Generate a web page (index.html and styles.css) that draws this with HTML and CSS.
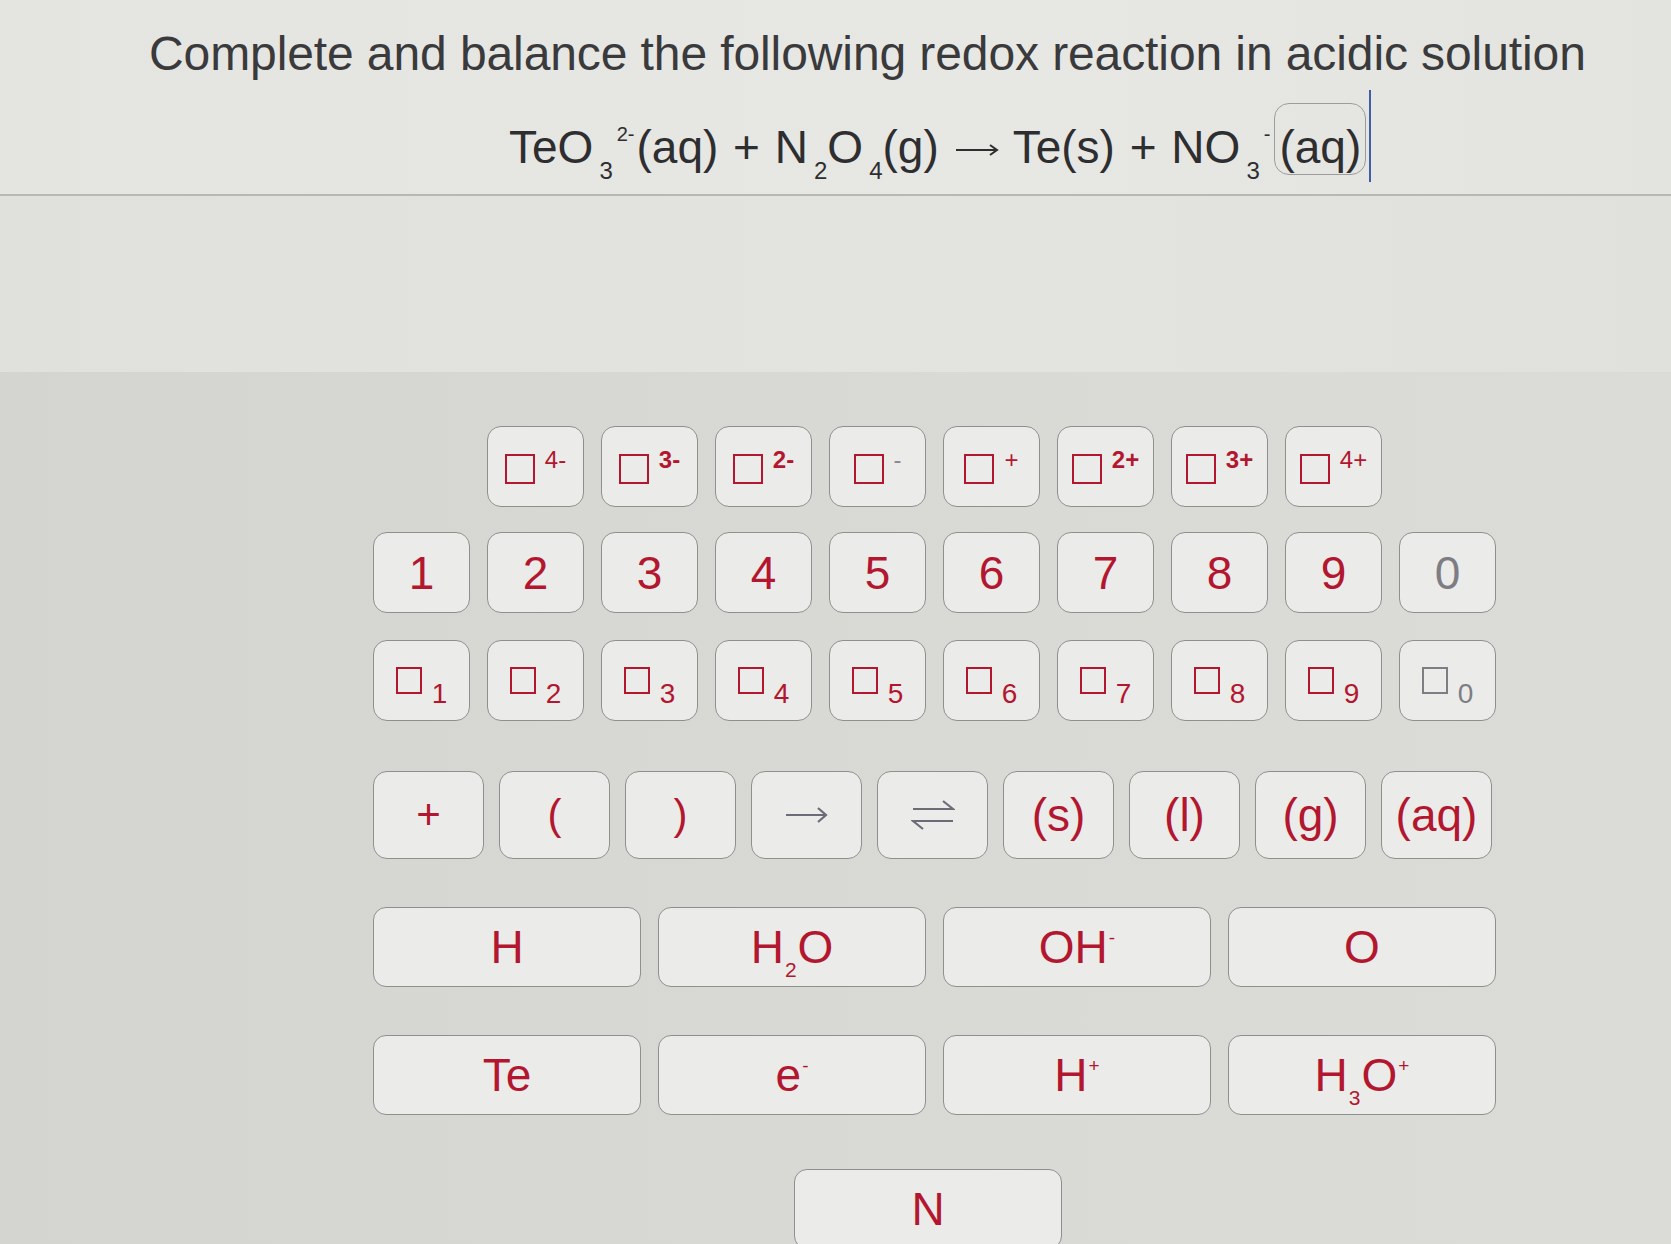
FILE: index.html
```html
<!DOCTYPE html>
<html lang="en">
<head>
<meta charset="utf-8">
<title>Redox keypad</title>
<link rel="stylesheet" href="styles.css">
</head>
<body>
<div class="page">
  <header class="question">
    <h1 class="title">Complete and balance the following redox reaction in acidic solution</h1>
    <div class="equation">TeO<span class="sub">3</span><span class="sup">2-</span>(aq) + N<span class="sub">2</span>O<span class="sub">4</span>(g)<svg class="eq-arrow" width="44" height="16" viewBox="0 0 44 16" aria-label="yields"><path d="M1 8 H42 M35 3 L42 8 L35 13" fill="none" stroke="#2e2e30" stroke-width="2"/></svg>Te(s) + NO<span class="sub">3</span><span class="sup">-</span><span class="aq-box">(aq)</span><span class="cursor"></span></div>
  </header>
  <div class="band"></div>
  <main class="keypad">
    <div class="row row-small charge-row">
      <button class="key key-small"><span class="inner"><span class="box"></span><span class="chg">4-</span></span></button>
      <button class="key key-small"><span class="inner"><span class="box"></span><span class="chg bold">3-</span></span></button>
      <button class="key key-small"><span class="inner"><span class="box"></span><span class="chg bold">2-</span></span></button>
      <button class="key key-small"><span class="inner"><span class="box"></span><span class="chg grey">-</span></span></button>
      <button class="key key-small"><span class="inner"><span class="box"></span><span class="chg">+</span></span></button>
      <button class="key key-small"><span class="inner"><span class="box"></span><span class="chg bold">2+</span></span></button>
      <button class="key key-small"><span class="inner"><span class="box"></span><span class="chg bold">3+</span></span></button>
      <button class="key key-small"><span class="inner"><span class="box"></span><span class="chg">4+</span></span></button>
    </div>
    <div class="row row-small">
      <button class="key key-small digit">1</button>
      <button class="key key-small digit">2</button>
      <button class="key key-small digit">3</button>
      <button class="key key-small digit">4</button>
      <button class="key key-small digit">5</button>
      <button class="key key-small digit">6</button>
      <button class="key key-small digit">7</button>
      <button class="key key-small digit">8</button>
      <button class="key key-small digit">9</button>
      <button class="key key-small digit grey">0</button>
    </div>
    <div class="row row-small row-index">
      <button class="key key-small"><span class="inner inner-sub"><span class="box sbox"></span><span class="idx">1</span></span></button>
      <button class="key key-small"><span class="inner inner-sub"><span class="box sbox"></span><span class="idx">2</span></span></button>
      <button class="key key-small"><span class="inner inner-sub"><span class="box sbox"></span><span class="idx">3</span></span></button>
      <button class="key key-small"><span class="inner inner-sub"><span class="box sbox"></span><span class="idx">4</span></span></button>
      <button class="key key-small"><span class="inner inner-sub"><span class="box sbox"></span><span class="idx">5</span></span></button>
      <button class="key key-small"><span class="inner inner-sub"><span class="box sbox"></span><span class="idx">6</span></span></button>
      <button class="key key-small"><span class="inner inner-sub"><span class="box sbox"></span><span class="idx">7</span></span></button>
      <button class="key key-small"><span class="inner inner-sub"><span class="box sbox"></span><span class="idx">8</span></span></button>
      <button class="key key-small"><span class="inner inner-sub"><span class="box sbox"></span><span class="idx">9</span></span></button>
      <button class="key key-small grey"><span class="inner inner-sub"><span class="box sbox"></span><span class="idx">0</span></span></button>
    </div>
    <div class="row row-state">
      <button class="key key-state sym">+</button>
      <button class="key key-state sym">(</button>
      <button class="key key-state sym">)</button>
      <button class="key key-state">
        <svg class="arrow" width="44" height="20" viewBox="0 0 44 20"><path d="M1 10 H41 M33 3 L41 10 L33 17" fill="none" stroke="#6d6b78" stroke-width="2.2"/></svg>
      </button>
      <button class="key key-state">
        <svg class="arrow" width="44" height="32" viewBox="0 0 44 32"><path d="M2 10 H42 L32 2 M42 22 H2 L12 30" fill="none" stroke="#6d6b78" stroke-width="2.2"/></svg>
      </button>
      <button class="key key-state">(s)</button>
      <button class="key key-state">(l)</button>
      <button class="key key-state">(g)</button>
      <button class="key key-state">(aq)</button>
    </div>
    <div class="row row-wide">
      <button class="key key-wide"><span class="lbl">H</span></button>
      <button class="key key-wide"><span class="lbl">H<span class="ksub">2</span>O</span></button>
      <button class="key key-wide"><span class="lbl">OH<span class="ksup">-</span></span></button>
      <button class="key key-wide"><span class="lbl">O</span></button>
    </div>
    <div class="row row-wide">
      <button class="key key-wide"><span class="lbl">Te</span></button>
      <button class="key key-wide"><span class="lbl">e<span class="ksup">-</span></span></button>
      <button class="key key-wide"><span class="lbl">H<span class="ksup">+</span></span></button>
      <button class="key key-wide"><span class="lbl">H<span class="ksub">3</span>O<span class="ksup">+</span></span></button>
    </div>
    <div class="row row-last">
      <button class="key key-wide"><span class="lbl">N</span></button>
    </div>
  </main>
</div>
</body>
</html>
```
FILE: styles.css
```css
html, body {
  margin: 0;
  padding: 0;
  height: 100%;
  overflow: hidden;
}
body {
  background: #d8d8d4;
  font-family: "Liberation Sans", Arial, sans-serif;
}
.page {
  width: 1671px;
  height: 1244px;
  overflow: hidden;
}
.question {
  height: 196px;
  box-sizing: border-box;
  background: linear-gradient(90deg, #e4e4e1, #e7e7e4 60%, #e3e3e0);
  border-bottom: 2px solid #b7b7b3;
  padding-top: 26px;
}
.title {
  margin: 0;
  padding-left: 149px;
  font-size: 48px;
  line-height: 56px;
  font-weight: normal;
  color: #3a3a3c;
  white-space: nowrap;
  letter-spacing: -0.1px;
}
.equation {
  margin-top: 19px;
  padding-left: 509px;
  font-size: 46px;
  line-height: 92px;
  height: 92px;
  color: #2e2e30;
  white-space: nowrap;
  word-spacing: 2px;
}
.eq-arrow {
  display: inline-block;
  vertical-align: 5px;
  margin: 0 14px 0 16px;
}
.sub {
  font-size: 24px;
  line-height: 0;
  vertical-align: -16px;
  margin-left: 6px;
}
.sup {
  font-size: 20px;
  line-height: 0;
  vertical-align: 22px;
  margin-left: 4px;
  margin-right: 2px;
}
.aq-box {
  display: inline-block;
  box-sizing: border-box;
  line-height: 51px;
  height: 72px;
  padding: 18px 4px 0;
  border: 1.5px solid #9c9c9c;
  border-radius: 15px;
  margin-left: 2px;
}
.cursor {
  display: inline-block;
  width: 2px;
  height: 92px;
  margin-top: -14px;
  background: #3f5ea6;
  vertical-align: -19px;
  margin-left: 3px;
}
.band {
  height: 176px;
  background: linear-gradient(90deg, #e0e0dc, #e3e3df 60%, #e0e0dc);
}
.keypad {
  padding-top: 54px;
  padding-left: 373px;
  display: flex;
  flex-direction: column;
  background: linear-gradient(90deg, #d4d4d0, #d9d9d5 60%, #dbdbd7);
  height: 1000px;
}
.row {
  display: flex;
}
.row-small {
  gap: 17px;
  margin-bottom: 25px;
}
.row-index {
  margin-top: 2px;
}
.charge-row {
  padding-left: 114px;
}
.row-state {
  gap: 15px;
  margin-top: 25px;
  margin-bottom: 48px;
}
.row-wide {
  gap: 17px;
  margin-bottom: 48px;
}
.row-last {
  margin-top: 6px;
  padding-left: 421px;
}
.key {
  box-sizing: border-box;
  display: flex;
  align-items: center;
  justify-content: center;
  margin: 0;
  padding: 0;
  background: #ebebe9;
  border: 1.5px solid #8f8f8f;
  border-radius: 14px;
  color: #b3172f;
  font-family: "Liberation Sans", Arial, sans-serif;
}
.key-small {
  width: 97px;
  height: 81px;
}
.key-state {
  width: 111px;
  height: 88px;
  font-size: 46px;
}
.key-state.sym {
  font-size: 42px;
}
.key-wide {
  width: 268px;
  height: 80px;
  font-size: 46px;
  border-radius: 13px;
}
.lbl {
  display: block;
  line-height: 56px;
  white-space: nowrap;
}
.digit {
  font-size: 46px;
}
.grey {
  color: #7d7d83;
}
.inner {
  display: flex;
  align-items: flex-start;
}
.box {
  display: block;
  width: 30px;
  height: 30px;
  box-sizing: border-box;
  border: 2px solid currentColor;
  margin-top: 5px;
}
.chg {
  font-size: 24px;
  line-height: 24px;
  margin-left: 10px;
  margin-top: -1px;
}
.bold {
  font-weight: bold;
}
.chg.grey {
  color: #8a8a8e;
}
.inner-sub {
  align-items: flex-end;
}
.sbox {
  width: 26px;
  height: 27px;
  margin-top: 0;
}
.idx {
  font-size: 28px;
  line-height: 28px;
  margin-left: 10px;
  margin-bottom: -14px;
}
.ksub {
  font-size: 21px;
  line-height: 0;
  vertical-align: -14px;
  margin: 0 1px;
}
.ksup {
  font-size: 19px;
  line-height: 0;
  vertical-align: 19px;
  margin-left: 1px;
}
.arrow {
  display: block;
}
```
